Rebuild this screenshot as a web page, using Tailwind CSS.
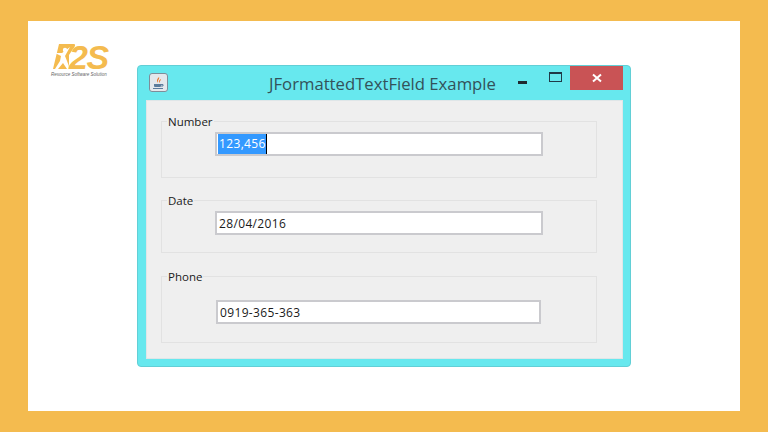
<!DOCTYPE html>
<html lang="en">
<head>
    <meta charset="UTF-8">
    <title>JFormattedTextField Example</title>
    <script src="https://cdn.jsdelivr.net/npm/@tailwindcss/browser@4"></script>
</head>
<body class="bg-[#f4bb4f] w-[768px] h-[432px] overflow-hidden font-['Open_Sans',sans-serif]">
    <div class="ml-[28px] mt-[21px] w-[712px] h-[390px] bg-white pt-[22px] pl-[23px] flex items-start">
        <!-- logo -->
        <div class="w-[86px] shrink-0">
            <div class="flex items-center h-[28px] pl-[1px]">
                <svg width="24" height="28" viewBox="0 0 24 28" class="shrink-0">
                    <path d="M7 1H22C24 1 23 4 21 6L17 12L17 26H1Z" fill="#f4bb4f"/>
                    <circle cx="13" cy="7" r="2.2" fill="#fff"/>
                    <path d="M3 10L10 10L18 4L13 13L15 18L18 26H15L11 20L6 26H3L8 18L9 13Z" fill="#fff"/>
                </svg>
                <span class="-ml-[7px] text-[#f4bb4f] text-[34px] leading-[28px] font-bold italic font-['Liberation_Sans',sans-serif] tracking-[-1.5px]">2S</span>
            </div>
            <p class="text-[4.5px] leading-[6px] mt-[1px] italic text-[#666] whitespace-nowrap font-['Liberation_Sans',sans-serif]">Resource Software Solution</p>
        </div>

        <!-- window -->
        <div class="mt-[22px] w-[494px] h-[302px] bg-[#67e8ee] border border-[#62cfd6] rounded-[4px] pl-[8px] pr-[7px] pb-[7px] flex flex-col">
            <div class="h-[34px] shrink-0 flex items-start">
                <div class="ml-[3px] mt-[7px] w-[19px] h-[19px] rounded-[3px] border border-[#7e8d99] bg-[#e4e8ec] flex items-center justify-center shrink-0">
                    <svg width="13" height="14" viewBox="0 0 13 14">
                        <path d="M7 1C8 3 5 4 6 7C4 5 5 3 7 1Z" fill="#e8772a"/>
                        <path d="M9 3C9 5 7 5 8 7C6 6 7 4 9 3Z" fill="#e8772a"/>
                        <path d="M2 8H9V10C9 11 8 11 7 11H4C3 11 2 11 2 10Z" fill="#5b7c9c"/>
                        <path d="M9 8.5H11V10H9" fill="none" stroke="#5b7c9c"/>
                        <path d="M1 12.5H11" stroke="#5b7c9c"/>
                    </svg>
                </div>
                <h1 class="ml-[101px] mt-[6px] text-[#33525a] text-[16.7px] leading-[23px] whitespace-nowrap w-[230px]">JFormattedTextField Example</h1>
                <div class="ml-[19px] mt-[15px] w-[9px] h-[3px] bg-[#1f2a30] shrink-0"></div>
                <div class="ml-[22px] mt-[6px] w-[13px] h-[10px] border border-[#1f3a48] border-t-[2px] shrink-0"></div>
                <div class="ml-[8px] w-[53px] h-[24px] bg-[#c95355] flex items-center justify-center shrink-0">
                    <svg width="10" height="10" viewBox="0 0 10 10"><path d="M1 1.5L9 8.5M9 1.5L1 8.5" stroke="#fff" stroke-width="2"/></svg>
                </div>
            </div>

            <!-- content pane -->
            <div class="flex-1 bg-[#efefef] border border-[#dfe6e8] pl-[14px] pr-[25px] text-[12px] text-[#1a1a1a]">
                <fieldset class="mt-[10px] h-[67px] border border-[#e2e2e2] pl-[5px]">
                    <legend class="leading-[20px] px-[1px] text-[11.5px] translate-y-[1px]">Number</legend>
                    <div class="ml-[48px] mt-[1px] w-[328px] h-[24px] bg-white border-2 border-[#cacace] flex items-center pl-[1px] pt-[2px] tracking-[0.35px]">
                        <span class="bg-[#3399ff] text-white leading-[20px] border-r border-black pl-[1px] -mt-[2px]">123,456</span>
                    </div>
                </fieldset>
                <fieldset class="mt-[12px] h-[63px] border border-[#e2e2e2] pl-[5px]">
                    <legend class="leading-[20px] px-[1px] text-[11.5px] translate-y-[1px]">Date</legend>
                    <div class="ml-[48px] mt-[1px] w-[328px] h-[24px] bg-white border-2 border-[#cacace] flex items-center pl-[2px] pt-[2px] tracking-[0.35px]">28/04/2016</div>
                </fieldset>
                <fieldset class="mt-[13px] h-[77px] border border-[#e2e2e2] pl-[5px]">
                    <legend class="leading-[20px] px-[1px] text-[11.5px] translate-y-[1px]">Phone</legend>
                    <div class="ml-[49px] mt-[14px] w-[325px] h-[24px] bg-white border-2 border-[#cacace] flex items-center pl-[2px] pt-[2px] tracking-[0.35px]">0919-365-363</div>
                </fieldset>
            </div>
        </div>
    </div>
</body>
</html>
